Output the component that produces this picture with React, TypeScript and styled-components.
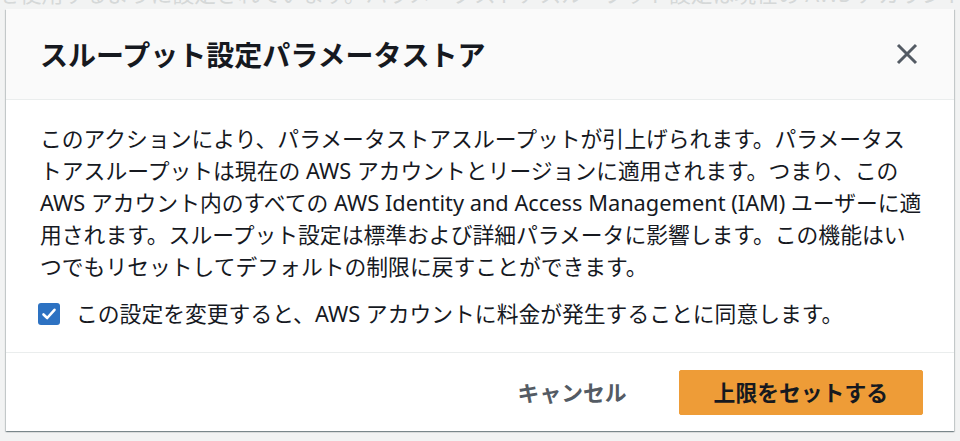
import styled, { createGlobalStyle } from 'styled-components';

const GlobalStyle = createGlobalStyle`
  html, body {
    margin: 0;
    padding: 0;
  }

  body {
    font-family: 'Noto Sans', 'Noto Sans CJK JP', sans-serif;
    color: #16191f;
    background-color: #f2f3f3;
  }
`;

const Page = styled.div`
  position: relative;

  width: 960px;
  height: 441px;
  overflow: hidden;

  background-color: #f2f3f3;
`;

const BackdropText = styled.p`
  margin: 0;
  position: absolute;
  top: -22px;
  left: -2px;

  white-space: nowrap;
  font-size: 21.8px;
  line-height: 32px;
  color: #d5d8d8;
`;

const Overlay = styled.div`
  position: absolute;
  inset: 0;

  display: flex;
  align-items: flex-start;
  justify-content: center;

  padding-top: 9px;
`;

const Modal = styled.div`
  width: 948px;

  display: flex;
  flex-direction: column;

  background-color: #ffffff;
  box-shadow: 0 1px 1px 0 rgba(0, 28, 36, 0.3), 1px 1px 1px 0 rgba(0, 28, 36, 0.15),
    -1px 1px 1px 0 rgba(0, 28, 36, 0.15);
`;

const Header = styled.div`
  height: 91px;
  padding: 0 32px 0 34px;
  box-sizing: border-box;

  display: flex;
  align-items: center;
  justify-content: space-between;

  background-color: #fafafa;
  border-bottom: 1px solid #eaeded;
`;

const Title = styled.h2`
  margin: 0;

  font-family: 'Noto Sans CJK JP', sans-serif;
  font-size: 28px;
  font-weight: 700;
  line-height: 1;
  color: #16191f;
`;

const CloseButton = styled.button`
  width: 30px;
  height: 30px;
  padding: 0;

  display: flex;
  align-items: center;
  justify-content: center;

  background: none;
  border: none;
  cursor: pointer;
`;

const Body = styled.div`
  padding: 23px 14px 22px 34px;

  display: flex;
  flex-direction: column;
  gap: 15px;
`;

const Description = styled.p`
  margin: 0;

  font-size: 21.8px;
  line-height: 32px;
  color: #16191f;
`;

const Agreement = styled.label`
  display: flex;
  align-items: center;
  gap: 16px;

  margin-left: -2px;

  font-size: 21.8px;
  line-height: 32px;
  color: #16191f;
`;

const CheckBox = styled.span`
  flex: 0 0 auto;

  width: 22px;
  height: 22px;
  border-radius: 3px;

  display: flex;
  align-items: center;
  justify-content: center;

  background-color: #2d72c2;
`;

const Footer = styled.div`
  height: 79px;
  padding: 0 31px;
  box-sizing: border-box;

  display: flex;
  align-items: center;
  justify-content: flex-end;
  gap: 20px;

  border-top: 1px solid #eaeded;
`;

const Button = styled.button<{ $primary?: boolean }>`
  height: 45px;
  padding: 0 ${({ $primary }) => ($primary ? '34px' : '31px')};

  font-family: 'Noto Sans CJK JP', sans-serif;
  font-size: 21.8px;
  font-weight: 700;
  line-height: 1;
  color: ${({ $primary }) => ($primary ? '#16191f' : '#545b64')};

  background-color: ${({ $primary }) => ($primary ? '#ee9c37' : 'transparent')};
  border: 1px solid ${({ $primary }) => ($primary ? '#ee9c37' : 'transparent')};
  border-radius: 2px;
  cursor: pointer;
`;

const CloseIcon = () => (
  <svg width="24" height="24" viewBox="0 0 24 24" fill="none">
    <path d="M3 3 L21 21 M21 3 L3 21" stroke="#545b64" strokeWidth="3" />
  </svg>
);

const CheckIcon = () => (
  <svg width="16" height="16" viewBox="0 0 16 16" fill="none">
    <path
      d="M2.5 8.5 L6.2 12 L13.5 3.8"
      stroke="#ffffff"
      strokeWidth="2.6"
      strokeLinecap="round"
      strokeLinejoin="round"
    />
  </svg>
);

const descriptionLines = [
  'このアクションにより、パラメータストアスループットが引上げられます。パラメータス',
  'トアスループットは現在の AWS アカウントとリージョンに適用されます。つまり、この',
  'AWS アカウント内のすべての AWS Identity and Access Management (IAM) ユーザーに適',
  '用されます。スループット設定は標準および詳細パラメータに影響します。この機能はい',
  'つでもリセットしてデフォルトの制限に戻すことができます。',
];

const App = () => {
  return (
    <Page>
      <GlobalStyle />
      <BackdropText>
        を使用するように設定されています。パラメータストアスループット設定は現在の AWS アカウントとリージョン
      </BackdropText>
      <Overlay>
        <Modal>
          <Header>
            <Title>スループット設定パラメータストア</Title>
            <CloseButton aria-label="閉じる">
              <CloseIcon />
            </CloseButton>
          </Header>
          <Body>
            <Description>
              {descriptionLines.map((line, index) => (
                <span key={line}>
                  {line}
                  {index < descriptionLines.length - 1 && <br />}
                </span>
              ))}
            </Description>
            <Agreement>
              <CheckBox>
                <CheckIcon />
              </CheckBox>
              この設定を変更すると、AWS アカウントに料金が発生することに同意します。
            </Agreement>
          </Body>
          <Footer>
            <Button>キャンセル</Button>
            <Button $primary>上限をセットする</Button>
          </Footer>
        </Modal>
      </Overlay>
    </Page>
  );
};

export default App;
